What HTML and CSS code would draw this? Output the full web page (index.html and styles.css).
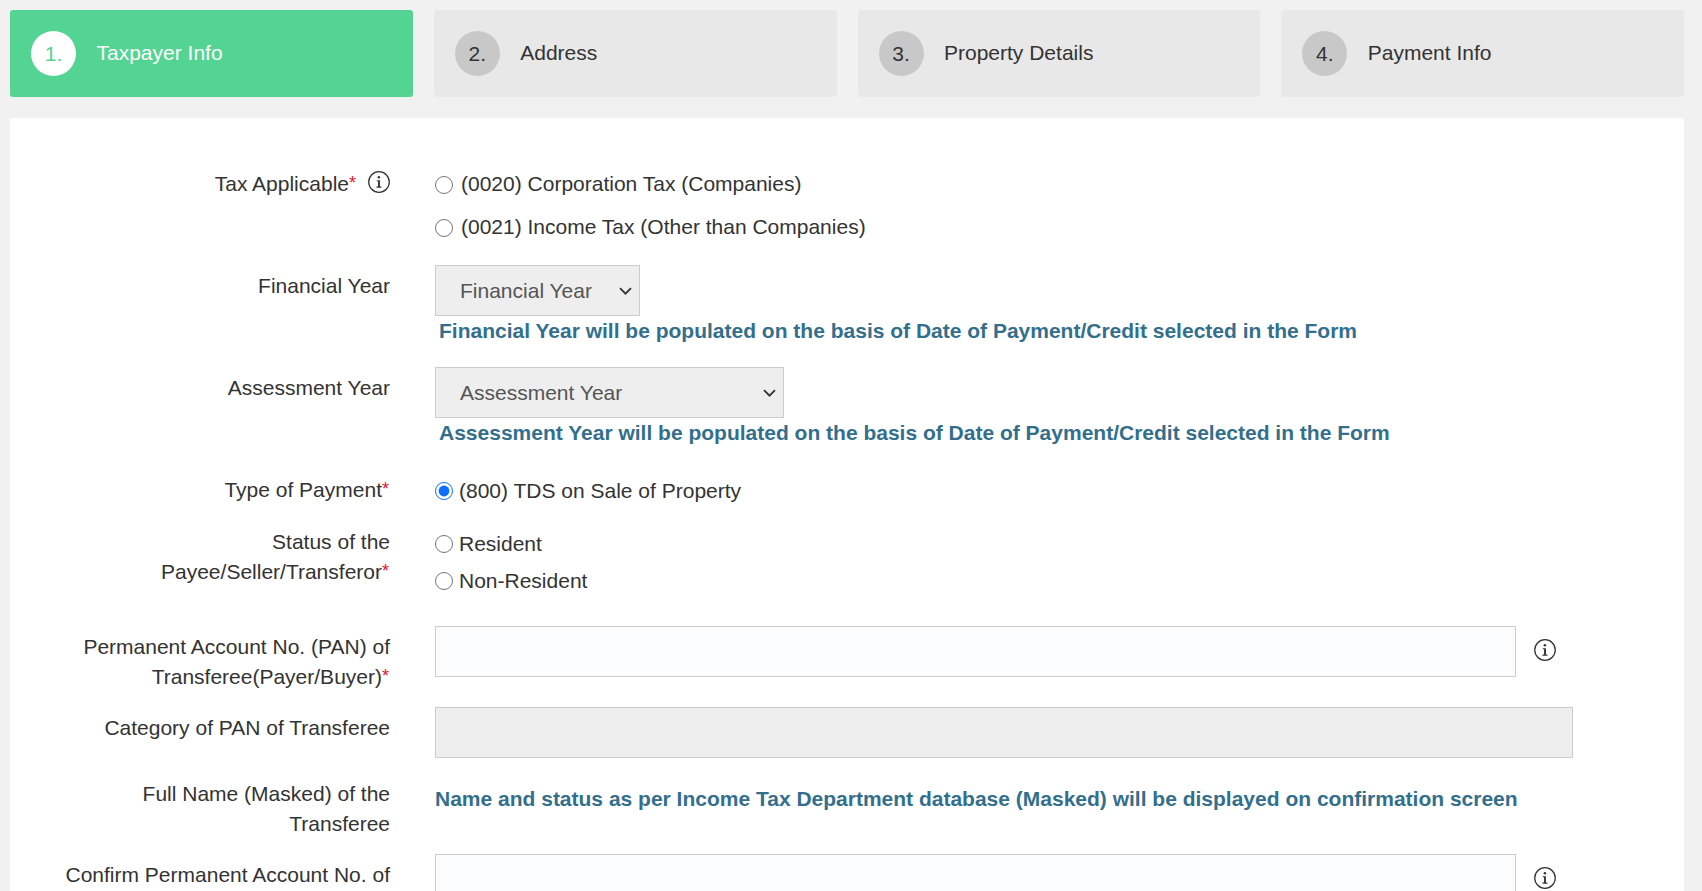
FILE: index.html
```html
<!DOCTYPE html>
<html lang="en">
<head>
  <meta charset="UTF-8">
  <meta name="viewport" content="width=device-width, initial-scale=1.0">
  <title>Taxpayer Info</title>
  <link rel="stylesheet" href="styles.css">
</head>
<body>

  <svg class="icon-defs" width="0" height="0" aria-hidden="true">
    <symbol id="info" viewBox="0 0 21 21">
      <circle cx="10.5" cy="10.5" r="9.8" fill="none" stroke="currentColor" stroke-width="1.2"/>
      <circle cx="10.4" cy="5.9" r="1.2" fill="currentColor"/>
      <path d="M8.4 8.9h3v6h1.4v1H8.1v-1h1.5v-5H8.4z" fill="currentColor"/>
    </symbol>
  </svg>

  <div class="steps">
    <div class="step active"><span class="step-no">1.</span><span class="step-name">Taxpayer Info</span></div>
    <div class="step"><span class="step-no">2.</span><span class="step-name">Address</span></div>
    <div class="step"><span class="step-no">3.</span><span class="step-name">Property Details</span></div>
    <div class="step"><span class="step-no">4.</span><span class="step-name">Payment Info</span></div>
  </div>

  <form class="card">
    <div class="row row-tax">
      <div class="label label-info">
        <span class="label-text">Tax Applicable<sup class="req">*</sup></span>
        <svg class="info"><use href="#info"/></svg>
      </div>
      <div class="field">
        <label class="radio radio-wide"><input type="radio" name="tax"> (0020) Corporation Tax (Companies)</label>
        <label class="radio radio-wide"><input type="radio" name="tax"> (0021) Income Tax (Other than Companies)</label>
      </div>
    </div>

    <div class="row">
      <div class="label">Financial Year</div>
      <div class="field">
        <select class="select select-fy" disabled><option>Financial Year</option></select>
        <p class="hint hint-under">Financial Year will be populated on the basis of Date of Payment/Credit selected in the Form</p>
      </div>
    </div>

    <div class="row">
      <div class="label">Assessment Year</div>
      <div class="field">
        <select class="select select-ay" disabled><option>Assessment Year</option></select>
        <p class="hint hint-under">Assessment Year will be populated on the basis of Date of Payment/Credit selected in the Form</p>
      </div>
    </div>

    <div class="row row-type">
      <div class="label">Type of Payment<sup class="req">*</sup></div>
      <div class="field">
        <label class="radio"><input type="radio" name="type" checked> (800) TDS on Sale of Property</label>
      </div>
    </div>

    <div class="row row-status">
      <div class="label">Status of the<br>Payee/Seller/Transferor<sup class="req">*</sup></div>
      <div class="field">
        <label class="radio"><input type="radio" name="status"> Resident</label>
        <label class="radio"><input type="radio" name="status"> Non-Resident</label>
      </div>
    </div>

    <div class="row">
      <div class="label">Permanent Account No. (PAN) of<br>Transferee(Payer/Buyer)<sup class="req">*</sup></div>
      <div class="field with-info">
        <input class="input" type="text">
        <svg class="info"><use href="#info"/></svg>
      </div>
    </div>

    <div class="row">
      <div class="label">Category of PAN of Transferee</div>
      <div class="field">
        <input class="input input-disabled" type="text" disabled>
      </div>
    </div>

    <div class="row">
      <div class="label">Full Name (Masked) of the<br>Transferee</div>
      <div class="field">
        <p class="hint hint-name">Name and status as per Income Tax Department database (Masked) will be displayed on confirmation screen</p>
      </div>
    </div>

    <div class="row">
      <div class="label">Confirm Permanent Account No. of</div>
      <div class="field with-info">
        <input class="input" type="text">
        <svg class="info"><use href="#info"/></svg>
      </div>
    </div>
  </form>

</body>
</html>
```

FILE: styles.css
```css
html {
  overflow: hidden;
}
body {
  font-family: "Liberation Sans", Arial, sans-serif;
  font-size: 21px;
  line-height: 30px;
  color: #333;
  background-color: #f1f1f1;
  margin: 0;
  padding: 10px 18px 0 10px;
}
.icon-defs {
  position: absolute;
}

/* steps */
.steps {
  display: flex;
  gap: 21px;
}
.step {
  flex: 1;
  height: 87px;
  display: flex;
  align-items: center;
  gap: 20.5px;
  padding-left: 21px;
  background-color: #e8e8e8;
  border-radius: 3px;
  color: #333;
}
.step-no {
  width: 45px;
  height: 45px;
  border-radius: 50%;
  background-color: #c8c8c8;
  display: flex;
  align-items: center;
  justify-content: center;
}
.step-name {
  margin-bottom: 2px;
}
.step.active {
  background-color: #54d492;
  color: white;
}
.step.active .step-no {
  background-color: white;
  color: #54d492;
}

/* form */
.card {
  margin-top: 21px;
  padding: 44px 0 40px;
  background-color: white;
  border-radius: 3px;
}
.row {
  display: grid;
  grid-template-columns: 380px 1fr;
  column-gap: 45px;
  margin-bottom: 15px;
}
.row-tax {
  min-height: 88px;
}
.row-type {
  height: 37px;
}
.row-status {
  min-height: 90px;
}
.label {
  padding-top: 6px;
  text-align: right;
}
.label-info {
  display: flex;
  justify-content: flex-end;
  gap: 11px;
}
.label-text {
  margin-top: 1px;
}
.label-info .info {
  margin-top: 3px;
}
.req {
  color: #e8112d;
  font-size: 18px;
  line-height: 0;
  vertical-align: 2px;
  margin-right: 1px;
}
.field {
  padding-right: 111px;
}
.with-info {
  display: flex;
  gap: 18px;
  padding-right: 128px;
}
.with-info .input {
  flex: 1;
  min-width: 0;
}
.with-info .info {
  margin-top: 13px;
}
.info {
  width: 22px;
  height: 22px;
  flex: none;
  color: #333;
}

/* radios */
.radio {
  display: flex;
  align-items: center;
  gap: 6px;
  height: 37px;
}
.radio input {
  width: 18px;
  height: 18px;
  margin: 0;
  accent-color: #0d6efd;
}
.radio-wide {
  height: 43px;
  gap: 8px;
}
.radio-wide input {
  margin-top: 3px;
}
.row-type .radio {
  margin-top: 3px;
}
.row-status .radio {
  margin-top: 4px;
}
.row-status .radio + .radio {
  margin-top: 0;
}

/* controls */
.select,
.input {
  display: block;
  height: 51px;
  box-sizing: border-box;
  font-family: inherit;
  font-size: 21px;
  color: #555;
  background-color: #eee;
  border: 1px solid #ccc;
  border-radius: 0;
  opacity: 1;
}
.select {
  appearance: none;
  padding: 0 24px 0 24px;
  background-image: url("data:image/svg+xml,%3Csvg xmlns='http://www.w3.org/2000/svg' width='13' height='8' viewBox='0 0 13 8'%3E%3Cpath d='M1 1.2l5.5 5.5L12 1.2' fill='none' stroke='%23333' stroke-width='1.8'/%3E%3C/svg%3E");
  background-repeat: no-repeat;
  background-position: right 7px center;
}
.select-fy {
  width: 205px;
}
.select-ay {
  width: 349px;
}
.input {
  width: 100%;
  background-color: #fbfcfe;
  padding: 0 12px;
}
.input-disabled {
  background-color: #eee;
}

/* notes under the fields */
.hint {
  margin: 0;
  font-weight: bold;
  color: #336f8c;
}
.hint-under {
  margin: 0 0 6px 4px;
  height: 30px;
}
.hint-name {
  padding-top: 11px;
}
```
